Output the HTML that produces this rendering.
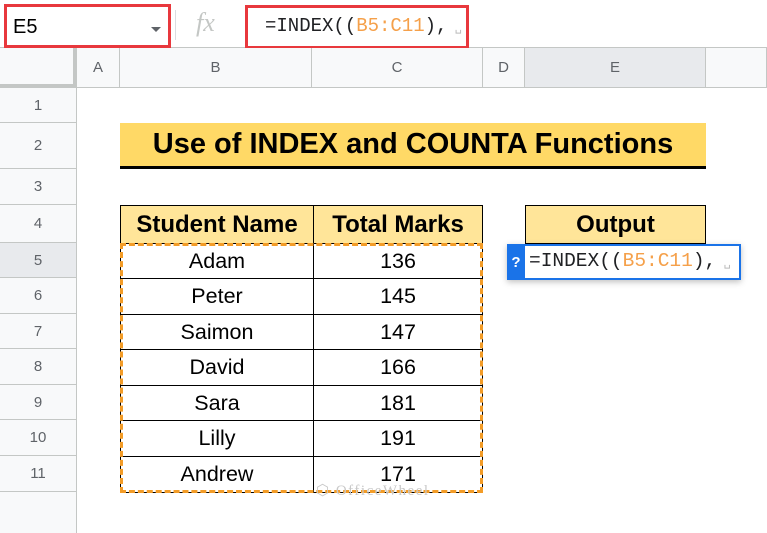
<!DOCTYPE html>
<html><head><style>
*{margin:0;padding:0;box-sizing:border-box}
body{width:767px;height:533px;position:relative;background:#fff;font-family:"Liberation Sans",Arial,sans-serif;overflow:hidden}
.a{position:absolute}
.rh{position:absolute;left:0;width:77px;background:#f8f9fa;border-bottom:1px solid #c4c7c5;border-right:1px solid #c4c7c5;color:#5f6368;font-size:15px;display:flex;align-items:center;justify-content:center}
.ch{position:absolute;top:48px;height:40px;background:#f8f9fa;border-right:1px solid #c4c7c5;border-bottom:1px solid #c4c7c5;color:#5f6368;font-size:15px;display:flex;align-items:center;justify-content:center}
.c{position:absolute;display:flex;align-items:center;justify-content:center;font-size:21.5px;color:#000;border:1px solid #000}
.h{background:#ffe599;font-weight:bold;font-size:24px}
</style></head><body>
<div class="a" style="left:0;top:0;width:767px;height:48px;background:#fff;border-bottom:1px solid #c4c7c5"></div>
<div class="a" style="left:4px;top:4px;width:167px;height:44px;border:3px solid #e8383d;background:#fff"></div>
<div class="a" style="left:13px;top:16px;font-size:20px;color:#000">E5</div>
<div class="a" style="left:151px;top:27px;width:0;height:0;border-left:5px solid transparent;border-right:5px solid transparent;border-top:5px solid #5f6368"></div>
<div class="a" style="left:175px;top:10px;width:1px;height:30px;background:#dadce0"></div>
<div class="a" style="left:196px;top:8px;font-family:'Liberation Serif',serif;font-style:italic;font-size:26px;color:#c4c7c5">fx</div>
<div class="a" style="left:245px;top:5px;width:224px;height:44px;border:3px solid #e8383d;background:#fff"></div>
<div class="a" style="left:265px;top:15px;font-family:'Liberation Mono',monospace;font-size:19px;color:#202124">=INDEX((<span style="color:#f5a04a">B5:C11</span>),<span style="color:#bbb;font-size:12px"> ␣</span></div>
<div class="a" style="left:0;top:48px;width:77px;height:40px;background:#f8f9fa;border-right:4px solid #c4c7c5;border-bottom:4px solid #c4c7c5"></div>
<div class="ch" style="left:77px;width:43px">A</div>
<div class="ch" style="left:120px;width:192px">B</div>
<div class="ch" style="left:312px;width:171px">C</div>
<div class="ch" style="left:483px;width:42px">D</div>
<div class="ch" style="left:525px;width:181px;background:#e8eaed">E</div>
<div class="ch" style="left:706px;width:61px"></div>
<div class="rh" style="top:88px;height:35px">1</div>
<div class="rh" style="top:123px;height:46px">2</div>
<div class="rh" style="top:169px;height:36px">3</div>
<div class="rh" style="top:205px;height:38px">4</div>
<div class="rh" style="top:243px;height:35px;background:#e8eaed">5</div>
<div class="rh" style="top:278px;height:36px">6</div>
<div class="rh" style="top:314px;height:35px">7</div>
<div class="rh" style="top:349px;height:36px">8</div>
<div class="rh" style="top:385px;height:35px">9</div>
<div class="rh" style="top:420px;height:36px">10</div>
<div class="rh" style="top:456px;height:36px">11</div>
<div class="a" style="left:0;top:492px;width:77px;height:41px;background:#f8f9fa;border-right:1px solid #c4c7c5"></div>
<div class="a" style="left:120px;top:123px;width:586px;height:46px;background:#ffd966;border-bottom:3px solid #000;display:flex;align-items:center;justify-content:center;font-weight:bold;font-size:29px;color:#000">Use of INDEX and COUNTA Functions</div>
<div class="c h" style="left:120px;top:205px;width:194px;height:39px">Student Name</div>
<div class="c h" style="left:313px;top:205px;width:170px;height:39px">Total Marks</div>
<div class="c" style="left:120px;top:243px;width:194px;height:36px">Adam</div><div class="c" style="left:313px;top:243px;width:170px;height:36px">136</div>
<div class="c" style="left:120px;top:278px;width:194px;height:37px">Peter</div><div class="c" style="left:313px;top:278px;width:170px;height:37px">145</div>
<div class="c" style="left:120px;top:314px;width:194px;height:36px">Saimon</div><div class="c" style="left:313px;top:314px;width:170px;height:36px">147</div>
<div class="c" style="left:120px;top:349px;width:194px;height:37px">David</div><div class="c" style="left:313px;top:349px;width:170px;height:37px">166</div>
<div class="c" style="left:120px;top:385px;width:194px;height:36px">Sara</div><div class="c" style="left:313px;top:385px;width:170px;height:36px">181</div>
<div class="c" style="left:120px;top:420px;width:194px;height:37px">Lilly</div><div class="c" style="left:313px;top:420px;width:170px;height:37px">191</div>
<div class="c" style="left:120px;top:456px;width:194px;height:37px">Andrew</div><div class="c" style="left:313px;top:456px;width:170px;height:37px">171</div>
<div class="a" style="left:120px;top:243px;width:363px;height:250px;border:3px dashed #f39c27"></div>
<div class="c h" style="left:525px;top:205px;width:181px;height:39px">Output</div>
<div class="a" style="left:507px;top:244px;width:234px;height:36px;box-shadow:0 2px 6px rgba(0,0,0,.25);background:#fff;border:2px solid #1a73e8"></div>
<div class="a" style="left:507px;top:244px;width:18px;height:36px;background:#1a73e8;color:#fff;font-weight:bold;font-size:15px;display:flex;align-items:center;justify-content:center">?</div>
<div class="a" style="left:529px;top:250px;font-family:'Liberation Mono',monospace;font-size:19.5px;color:#202124">=INDEX((<span style="color:#f5a04a">B5:C11</span>),<span style="color:#bbb;font-size:12px"> ␣</span></div>
<div class="a" style="left:316px;top:481px;font-family:'Liberation Serif',serif;font-size:15px;color:#c8c8c8;letter-spacing:1.5px">⬡ OfficeWheel</div>
</body></html>
